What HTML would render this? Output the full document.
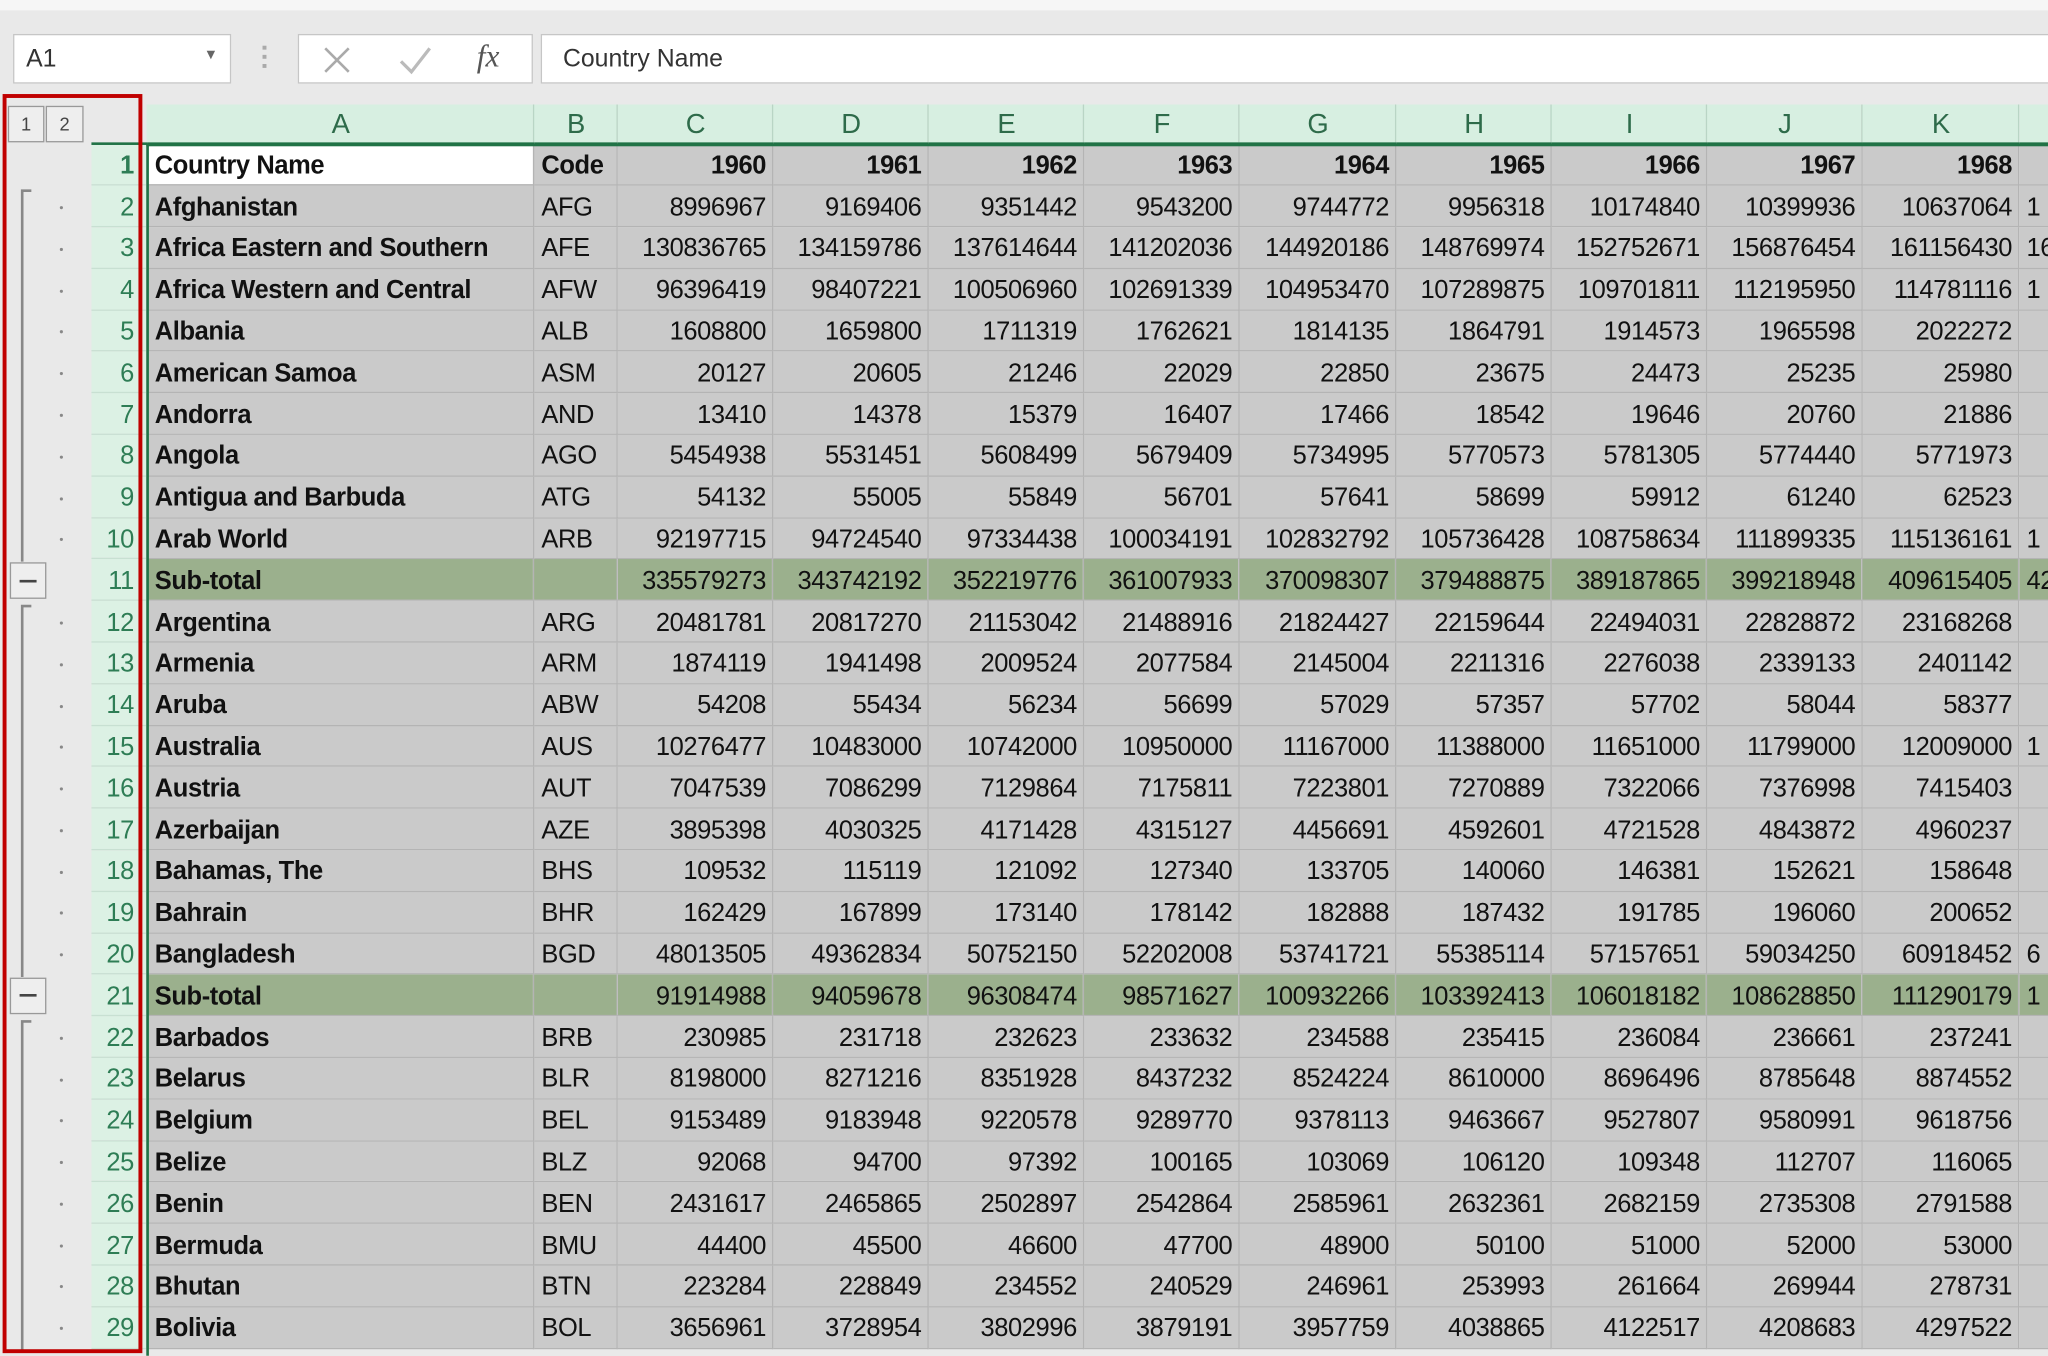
<!DOCTYPE html>
<html><head><meta charset="utf-8"><style>
html,body{margin:0;padding:0;background:#e9e9e9;overflow:hidden;width:2048px;height:1355px}
#w{position:absolute;left:0;top:0;width:1568px;height:1038px;transform:scale(1.30612);transform-origin:0 0;background:#e9e9e9;font-family:"Liberation Sans",sans-serif;overflow:hidden}
.box{position:absolute;background:#fff;border:1px solid #c6c6c6;box-sizing:border-box}
table{position:absolute;left:70px;top:80px;width:1594px;border-collapse:collapse;table-layout:fixed;font-size:19.5px;color:#111}
td{height:31.8px;padding:3px 4px 0 6px;border:1px solid #b4b4b4;background:#cacaca;text-align:right;white-space:nowrap;overflow:hidden;box-sizing:border-box;letter-spacing:-0.3px}
td.a{text-align:left;font-weight:bold}
td.b{text-align:left}
td.r{background:#dcf1e4;color:#2e7d55;border:none;border-bottom:1px solid #c8e0d2;padding:3px 9px 0 0}
tr.h td{background:#d7efe1;color:#2e6b4a;text-align:center;font-size:21px;height:30px;padding-top:3px;border:none;border-right:1px solid #b9d5c5;border-bottom:2px solid #217346}
tr.h td.c{background:#e9e9e9;border-right:none}
tr.s td{background:#9bb08d}
tr.s td.r{background:#dcf1e4}
tr.f td{font-weight:bold}
td.sel{background:#fff}
td.l{text-align:left}
</style></head><body><div id="w">
<div style="position:absolute;left:0;top:0;width:1568px;height:8px;background:#f6f6f6"></div>
<div class="box" style="left:10px;top:26px;width:167px;height:38px"><span style="position:absolute;left:9px;top:8px;font-size:19px;color:#333">A1</span><span style="position:absolute;left:145px;top:9px;font-size:11px;color:#666">▼</span></div>
<div style="position:absolute;left:201px;top:35px;width:3px;height:3px;background:#aaa;box-shadow:0 7px 0 #aaa,0 14px 0 #aaa"></div>
<div class="box" style="left:228px;top:26px;width:180px;height:38px">
<svg width="180" height="38" style="position:absolute;left:0;top:0"><path d="M20 10 L38 28 M38 10 L20 28" stroke="#aaa" stroke-width="2" fill="none"/><path d="M78 20 L86 28 L100 10" stroke="#bbb" stroke-width="2.5" fill="none"/></svg>
<span style="position:absolute;left:136px;top:4px;font-family:'Liberation Serif',serif;font-style:italic;font-size:24px;color:#555">fx</span></div>
<div class="box" style="left:414px;top:26px;width:1160px;height:38px"><span style="position:absolute;left:16px;top:8px;font-size:19px;color:#333">Country Name</span></div>
<div class="box" style="left:6px;top:81px;width:28px;height:28px;background:#eee;border-color:#999;font-size:14px;color:#444;text-align:center;line-height:26px">1</div>
<div class="box" style="left:35px;top:81px;width:29px;height:28px;background:#eee;border-color:#999;font-size:14px;color:#444;text-align:center;line-height:26px">2</div>
<svg style="position:absolute;left:0;top:0" width="112" height="1038">
<path d="M88 104 L107 104 L107 86 Z" fill="#217346"/>
<path d="M24 146 L17 146 L17 430" stroke="#888" stroke-width="2" fill="none"/>
<rect x="8" y="431" width="27" height="27" fill="#eee" stroke="#999"/><path d="M15 445 L28 445" stroke="#444" stroke-width="2"/>
<path d="M24 464 L17 464 L17 748" stroke="#888" stroke-width="2" fill="none"/>
<rect x="8" y="749" width="27" height="27" fill="#eee" stroke="#999"/><path d="M15 762 L28 762" stroke="#444" stroke-width="2"/>
<path d="M24 782 L17 782 L17 1035" stroke="#888" stroke-width="2" fill="none"/>
<g fill="#888">
<circle cx="47" cy="159" r="1.2"/><circle cx="47" cy="191" r="1.2"/><circle cx="47" cy="223" r="1.2"/><circle cx="47" cy="254" r="1.2"/><circle cx="47" cy="286" r="1.2"/><circle cx="47" cy="318" r="1.2"/><circle cx="47" cy="350" r="1.2"/><circle cx="47" cy="382" r="1.2"/><circle cx="47" cy="413" r="1.2"/>
<circle cx="47" cy="477" r="1.2"/><circle cx="47" cy="509" r="1.2"/><circle cx="47" cy="541" r="1.2"/><circle cx="47" cy="572" r="1.2"/><circle cx="47" cy="604" r="1.2"/><circle cx="47" cy="636" r="1.2"/><circle cx="47" cy="668" r="1.2"/><circle cx="47" cy="699" r="1.2"/><circle cx="47" cy="731" r="1.2"/>
<circle cx="47" cy="795" r="1.2"/><circle cx="47" cy="827" r="1.2"/><circle cx="47" cy="858" r="1.2"/><circle cx="47" cy="890" r="1.2"/><circle cx="47" cy="922" r="1.2"/><circle cx="47" cy="954" r="1.2"/><circle cx="47" cy="985" r="1.2"/><circle cx="47" cy="1017" r="1.2"/></g>
</svg>
<table>
<colgroup><col style="width:42px"><col style="width:296px"><col style="width:64px"><col style="width:119px"><col style="width:119px"><col style="width:119px"><col style="width:119px"><col style="width:120px"><col style="width:119px"><col style="width:119px"><col style="width:119px"><col style="width:120px"><col style="width:119px"></colgroup>
<tr class="h"><td class="c"></td><td>A</td><td>B</td><td>C</td><td>D</td><td>E</td><td>F</td><td>G</td><td>H</td><td>I</td><td>J</td><td>K</td><td></td></tr>
<tr class="f"><td class="r">1</td><td class="a sel">Country Name</td><td class="b">Code</td><td>1960</td><td>1961</td><td>1962</td><td>1963</td><td>1964</td><td>1965</td><td>1966</td><td>1967</td><td>1968</td><td class="l"></td></tr>
<tr><td class="r">2</td><td class="a">Afghanistan</td><td class="b">AFG</td><td>8996967</td><td>9169406</td><td>9351442</td><td>9543200</td><td>9744772</td><td>9956318</td><td>10174840</td><td>10399936</td><td>10637064</td><td class="l">1</td></tr>
<tr><td class="r">3</td><td class="a">Africa Eastern and Southern</td><td class="b">AFE</td><td>130836765</td><td>134159786</td><td>137614644</td><td>141202036</td><td>144920186</td><td>148769974</td><td>152752671</td><td>156876454</td><td>161156430</td><td class="l">16</td></tr>
<tr><td class="r">4</td><td class="a">Africa Western and Central</td><td class="b">AFW</td><td>96396419</td><td>98407221</td><td>100506960</td><td>102691339</td><td>104953470</td><td>107289875</td><td>109701811</td><td>112195950</td><td>114781116</td><td class="l">1</td></tr>
<tr><td class="r">5</td><td class="a">Albania</td><td class="b">ALB</td><td>1608800</td><td>1659800</td><td>1711319</td><td>1762621</td><td>1814135</td><td>1864791</td><td>1914573</td><td>1965598</td><td>2022272</td><td class="l"></td></tr>
<tr><td class="r">6</td><td class="a">American Samoa</td><td class="b">ASM</td><td>20127</td><td>20605</td><td>21246</td><td>22029</td><td>22850</td><td>23675</td><td>24473</td><td>25235</td><td>25980</td><td class="l"></td></tr>
<tr><td class="r">7</td><td class="a">Andorra</td><td class="b">AND</td><td>13410</td><td>14378</td><td>15379</td><td>16407</td><td>17466</td><td>18542</td><td>19646</td><td>20760</td><td>21886</td><td class="l"></td></tr>
<tr><td class="r">8</td><td class="a">Angola</td><td class="b">AGO</td><td>5454938</td><td>5531451</td><td>5608499</td><td>5679409</td><td>5734995</td><td>5770573</td><td>5781305</td><td>5774440</td><td>5771973</td><td class="l"></td></tr>
<tr><td class="r">9</td><td class="a">Antigua and Barbuda</td><td class="b">ATG</td><td>54132</td><td>55005</td><td>55849</td><td>56701</td><td>57641</td><td>58699</td><td>59912</td><td>61240</td><td>62523</td><td class="l"></td></tr>
<tr><td class="r">10</td><td class="a">Arab World</td><td class="b">ARB</td><td>92197715</td><td>94724540</td><td>97334438</td><td>100034191</td><td>102832792</td><td>105736428</td><td>108758634</td><td>111899335</td><td>115136161</td><td class="l">1</td></tr>
<tr class="s"><td class="r">11</td><td class="a">Sub-total</td><td class="b"></td><td>335579273</td><td>343742192</td><td>352219776</td><td>361007933</td><td>370098307</td><td>379488875</td><td>389187865</td><td>399218948</td><td>409615405</td><td class="l">42</td></tr>
<tr><td class="r">12</td><td class="a">Argentina</td><td class="b">ARG</td><td>20481781</td><td>20817270</td><td>21153042</td><td>21488916</td><td>21824427</td><td>22159644</td><td>22494031</td><td>22828872</td><td>23168268</td><td class="l"></td></tr>
<tr><td class="r">13</td><td class="a">Armenia</td><td class="b">ARM</td><td>1874119</td><td>1941498</td><td>2009524</td><td>2077584</td><td>2145004</td><td>2211316</td><td>2276038</td><td>2339133</td><td>2401142</td><td class="l"></td></tr>
<tr><td class="r">14</td><td class="a">Aruba</td><td class="b">ABW</td><td>54208</td><td>55434</td><td>56234</td><td>56699</td><td>57029</td><td>57357</td><td>57702</td><td>58044</td><td>58377</td><td class="l"></td></tr>
<tr><td class="r">15</td><td class="a">Australia</td><td class="b">AUS</td><td>10276477</td><td>10483000</td><td>10742000</td><td>10950000</td><td>11167000</td><td>11388000</td><td>11651000</td><td>11799000</td><td>12009000</td><td class="l">1</td></tr>
<tr><td class="r">16</td><td class="a">Austria</td><td class="b">AUT</td><td>7047539</td><td>7086299</td><td>7129864</td><td>7175811</td><td>7223801</td><td>7270889</td><td>7322066</td><td>7376998</td><td>7415403</td><td class="l"></td></tr>
<tr><td class="r">17</td><td class="a">Azerbaijan</td><td class="b">AZE</td><td>3895398</td><td>4030325</td><td>4171428</td><td>4315127</td><td>4456691</td><td>4592601</td><td>4721528</td><td>4843872</td><td>4960237</td><td class="l"></td></tr>
<tr><td class="r">18</td><td class="a">Bahamas, The</td><td class="b">BHS</td><td>109532</td><td>115119</td><td>121092</td><td>127340</td><td>133705</td><td>140060</td><td>146381</td><td>152621</td><td>158648</td><td class="l"></td></tr>
<tr><td class="r">19</td><td class="a">Bahrain</td><td class="b">BHR</td><td>162429</td><td>167899</td><td>173140</td><td>178142</td><td>182888</td><td>187432</td><td>191785</td><td>196060</td><td>200652</td><td class="l"></td></tr>
<tr><td class="r">20</td><td class="a">Bangladesh</td><td class="b">BGD</td><td>48013505</td><td>49362834</td><td>50752150</td><td>52202008</td><td>53741721</td><td>55385114</td><td>57157651</td><td>59034250</td><td>60918452</td><td class="l">6</td></tr>
<tr class="s"><td class="r">21</td><td class="a">Sub-total</td><td class="b"></td><td>91914988</td><td>94059678</td><td>96308474</td><td>98571627</td><td>100932266</td><td>103392413</td><td>106018182</td><td>108628850</td><td>111290179</td><td class="l">1</td></tr>
<tr><td class="r">22</td><td class="a">Barbados</td><td class="b">BRB</td><td>230985</td><td>231718</td><td>232623</td><td>233632</td><td>234588</td><td>235415</td><td>236084</td><td>236661</td><td>237241</td><td class="l"></td></tr>
<tr><td class="r">23</td><td class="a">Belarus</td><td class="b">BLR</td><td>8198000</td><td>8271216</td><td>8351928</td><td>8437232</td><td>8524224</td><td>8610000</td><td>8696496</td><td>8785648</td><td>8874552</td><td class="l"></td></tr>
<tr><td class="r">24</td><td class="a">Belgium</td><td class="b">BEL</td><td>9153489</td><td>9183948</td><td>9220578</td><td>9289770</td><td>9378113</td><td>9463667</td><td>9527807</td><td>9580991</td><td>9618756</td><td class="l"></td></tr>
<tr><td class="r">25</td><td class="a">Belize</td><td class="b">BLZ</td><td>92068</td><td>94700</td><td>97392</td><td>100165</td><td>103069</td><td>106120</td><td>109348</td><td>112707</td><td>116065</td><td class="l"></td></tr>
<tr><td class="r">26</td><td class="a">Benin</td><td class="b">BEN</td><td>2431617</td><td>2465865</td><td>2502897</td><td>2542864</td><td>2585961</td><td>2632361</td><td>2682159</td><td>2735308</td><td>2791588</td><td class="l"></td></tr>
<tr><td class="r">27</td><td class="a">Bermuda</td><td class="b">BMU</td><td>44400</td><td>45500</td><td>46600</td><td>47700</td><td>48900</td><td>50100</td><td>51000</td><td>52000</td><td>53000</td><td class="l"></td></tr>
<tr><td class="r">28</td><td class="a">Bhutan</td><td class="b">BTN</td><td>223284</td><td>228849</td><td>234552</td><td>240529</td><td>246961</td><td>253993</td><td>261664</td><td>269944</td><td>278731</td><td class="l"></td></tr>
<tr><td class="r">29</td><td class="a">Bolivia</td><td class="b">BOL</td><td>3656961</td><td>3728954</td><td>3802996</td><td>3879191</td><td>3957759</td><td>4038865</td><td>4122517</td><td>4208683</td><td>4297522</td><td class="l"></td></tr>
</table>
<div style="position:absolute;left:112px;top:110px;width:1460px;height:930px;border-left:2px solid #217346;border-top:2px solid #217346;box-sizing:border-box;pointer-events:none"></div>
<div style="position:absolute;left:2px;top:72px;width:107px;height:964px;border:3px solid #c00000;box-sizing:border-box"></div>
</div></body></html>
